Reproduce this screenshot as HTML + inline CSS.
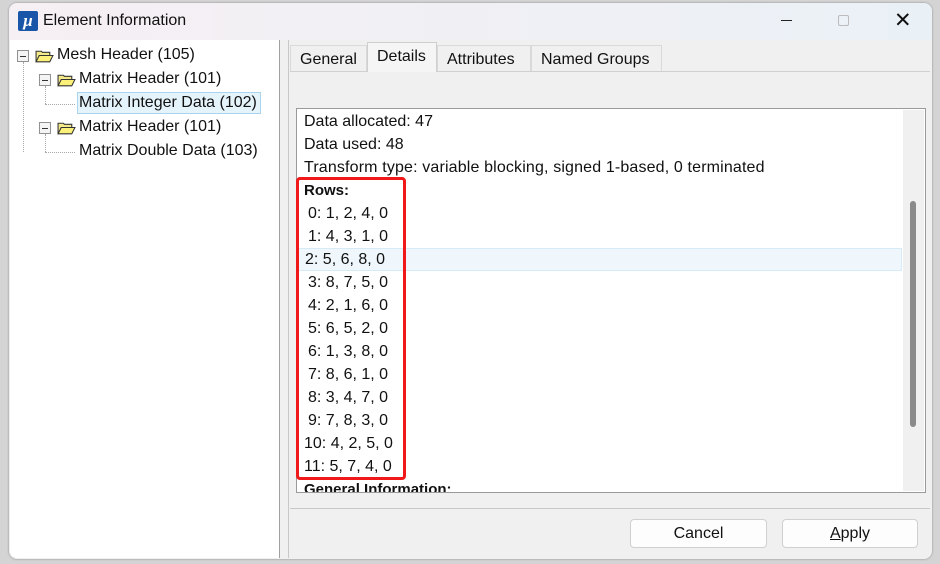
<!DOCTYPE html>
<html><head><style>
*{margin:0;padding:0;box-sizing:border-box}
body{width:940px;height:564px;background:#d4d4d4;position:relative;overflow:hidden;font-family:"Liberation Sans",sans-serif;font-size:15px;color:#111}
.dlg{position:absolute;left:9px;top:3px;width:923px;height:556px;background:#f0f0f0;border-radius:8px;overflow:hidden;box-shadow:0 0 2px #888}
.ab{position:absolute}
.t{position:absolute;white-space:nowrap;font-size:16px;color:#111}
.box{position:absolute;width:12px;height:12px;border:1px solid #919191;background:#f4f4f4}
.box:after{content:"";position:absolute;left:2px;top:5px;width:6px;height:1px;background:#333}
.fold{position:absolute;width:19px;height:14px}
.tab{position:absolute;top:43px;height:28px;border:1px solid #d9d9d9;border-bottom:none;background:#f0f0f0;padding:5px 9px;font-size:16px}
.line{position:absolute;left:304px;font-size:16px;white-space:nowrap}
.btn{position:absolute;top:519px;height:29px;background:#fdfdfd;border:1px solid #d0d0d0;border-radius:4px;text-align:center;line-height:27px;font-size:16px}
</style></head><body>
<div class="dlg"></div>
<div class="ab" style="left:9px;top:3px;width:923px;height:37px;border-radius:8px 8px 0 0;background:linear-gradient(90deg,#f6eff3,#eaf1f6)"></div>
<div class="ab" style="left:18px;top:11px;width:20px;height:20px;background:#1a56a8;border-radius:2px;color:#fff;font-style:italic;font-weight:bold;font-size:17px;line-height:20px;text-align:center;font-family:'Liberation Serif',serif">μ</div>
<div class="t" style="left:43px;top:12px;font-size:16px">Element Information</div>
<div class="ab" style="left:781px;top:20px;width:11px;height:1px;background:#222"></div>
<div class="ab" style="left:838px;top:15px;width:11px;height:11px;border:1px solid #bbb;border-radius:2px"></div>
<div class="t" style="left:894px;top:8px;font-size:21px;font-weight:300">✕</div>

<div class="ab" style="left:10px;top:40px;width:270px;height:518px;background:#fff;border-right:1px solid #a0a0a0;border-radius:0 0 0 8px"></div>
<div class="ab" style="left:23px;top:62px;height:90px;border-left:1px dotted #aaa"></div>
<div class="ab" style="left:45px;top:86px;height:18px;border-left:1px dotted #aaa"></div>
<div class="ab" style="left:45px;top:104px;width:30px;border-top:1px dotted #aaa"></div>
<div class="ab" style="left:45px;top:134px;height:18px;border-left:1px dotted #aaa"></div>
<div class="ab" style="left:45px;top:152px;width:30px;border-top:1px dotted #aaa"></div>
<div class="box" style="left:17px;top:50px"></div>
<div class="box" style="left:39px;top:74px"></div>
<div class="box" style="left:39px;top:122px"></div>
<svg class="fold" style="left:35px;top:49px" viewBox="0 0 18 13"><path d="M1 12V2h5l1 1h7v3" fill="#f3e98a" stroke="#333"/><path d="M1 12l3-6h13l-3 6z" fill="#fbf07a" stroke="#333"/></svg>
<svg class="fold" style="left:57px;top:73px" viewBox="0 0 18 13"><path d="M1 12V2h5l1 1h7v3" fill="#f3e98a" stroke="#333"/><path d="M1 12l3-6h13l-3 6z" fill="#fbf07a" stroke="#333"/></svg>
<svg class="fold" style="left:57px;top:121px" viewBox="0 0 18 13"><path d="M1 12V2h5l1 1h7v3" fill="#f3e98a" stroke="#333"/><path d="M1 12l3-6h13l-3 6z" fill="#fbf07a" stroke="#333"/></svg>
<div class="t" style="left:57px;top:46px">Mesh Header (105)</div>
<div class="t" style="left:79px;top:70px">Matrix Header (101)</div>
<div class="ab" style="left:77px;top:92px;width:184px;height:22px;background:#e5f3fb;border:1px solid #aad4ee"></div>
<div class="t" style="left:79px;top:94px">Matrix Integer Data (102)</div>
<div class="t" style="left:79px;top:118px">Matrix Header (101)</div>
<div class="t" style="left:79px;top:142px">Matrix Double Data (103)</div>

<div class="ab" style="left:288px;top:40px;width:1px;height:518px;background:#c8c8c8"></div>
<div class="ab" style="left:290px;top:71px;width:640px;height:438px;border-top:1px solid #d0d0d0;border-bottom:1px solid #c8c8c8"></div>
<div class="tab" style="left:290px;width:77px;top:45px;height:26px">General</div>
<div class="tab" style="left:367px;width:70px;top:42px;height:30px;background:#f5f5f5;border-color:#cfcfcf">Details</div>
<div class="tab" style="left:437px;width:94px;top:45px;height:26px">Attributes</div>
<div class="tab" style="left:531px;width:131px;top:45px;height:26px">Named Groups</div>

<div class="ab" style="left:296px;top:108px;width:630px;height:385px;background:#fff;border:1px solid #9a9a9a"></div>
<div class="ab" style="left:903px;top:110px;width:21px;height:381px;background:#f0f0f0"></div>
<div class="ab" style="left:910px;top:201px;width:6px;height:226px;background:#8a8a8a;border-radius:3px"></div>
<div class="ab" style="left:298px;top:248px;width:604px;height:23px;background:#f0f7fc;border:1px solid #d6eaf7"></div>
<div class="line" style="top:113px">Data allocated: 47</div>
<div class="line" style="top:136px">Data used: 48</div>
<div class="line" style="top:159px;letter-spacing:0.15px">Transform type: variable blocking, signed 1-based, 0 terminated</div>
<div class="line" style="top:182px;font-weight:bold;font-size:15px">Rows:</div>
<div class="line" style="top:205px;left:308px">0: 1, 2, 4, 0</div>
<div class="line" style="top:228px;left:308px">1: 4, 3, 1, 0</div>
<div class="line" style="top:251px;left:305px">2: 5, 6, 8, 0</div>
<div class="line" style="top:274px;left:308px">3: 8, 7, 5, 0</div>
<div class="line" style="top:297px;left:308px">4: 2, 1, 6, 0</div>
<div class="line" style="top:320px;left:308px">5: 6, 5, 2, 0</div>
<div class="line" style="top:343px;left:308px">6: 1, 3, 8, 0</div>
<div class="line" style="top:366px;left:308px">7: 8, 6, 1, 0</div>
<div class="line" style="top:389px;left:308px">8: 3, 4, 7, 0</div>
<div class="line" style="top:412px;left:308px">9: 7, 8, 3, 0</div>
<div class="line" style="top:435px;left:304px">10: 4, 2, 5, 0</div>
<div class="line" style="top:458px;left:304px">11: 5, 7, 4, 0</div>
<div class="ab" style="left:297px;top:479px;width:600px;height:13px;overflow:hidden"><div class="line" style="left:7px;top:2px;font-weight:bold;font-size:15px">General Information:</div></div>
<div class="ab" style="left:296px;top:177px;width:110px;height:303px;border:3px solid #f01818;border-radius:4px"></div>

<div class="btn" style="left:630px;width:137px">Cancel</div>
<div class="btn" style="left:782px;width:136px"><u>A</u>pply</div>
</body></html>
